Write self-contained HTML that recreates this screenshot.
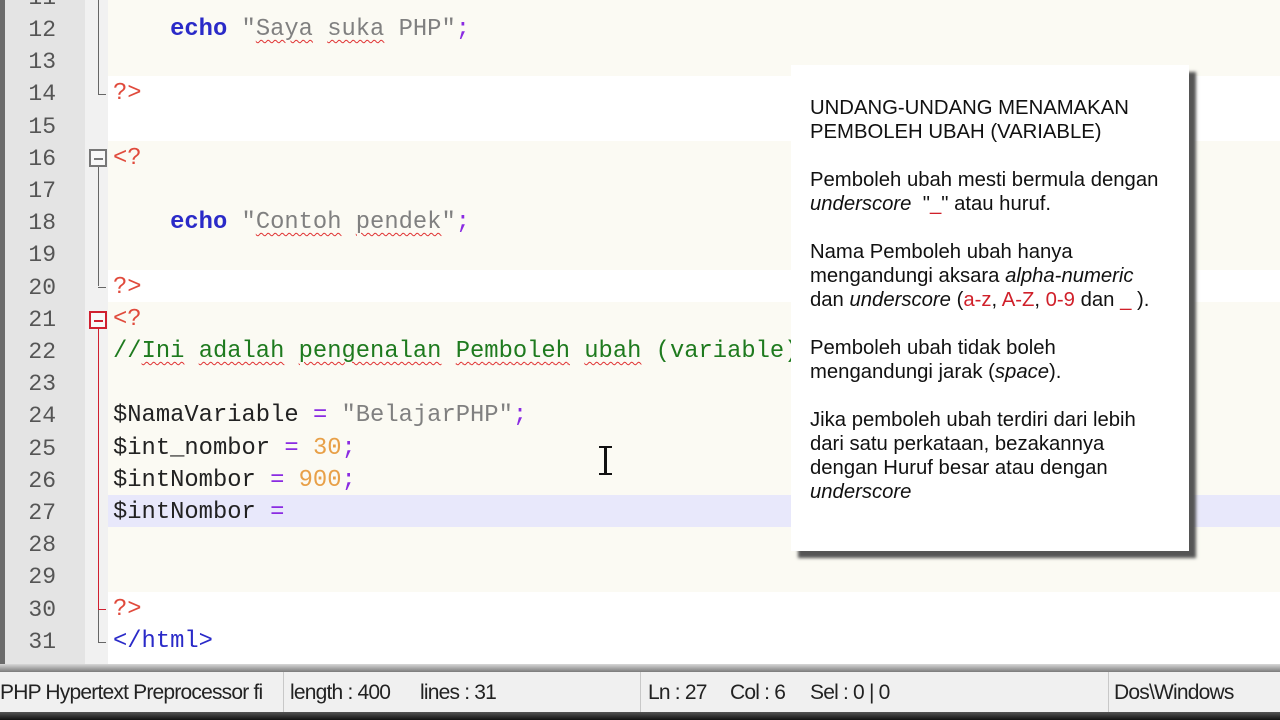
<!DOCTYPE html>
<html><head><style>
*{margin:0;padding:0;box-sizing:border-box}
body{width:1280px;height:720px;overflow:hidden;background:#fff;position:relative;font-family:"Liberation Mono",monospace}
#ed{position:absolute;left:0;top:0;width:1280px;height:664px;background:#fff;overflow:hidden}
.lb{position:absolute;left:0;top:0;width:5px;height:664px;background:#6b6b6b}
.nm{position:absolute;left:5px;top:0;width:80px;height:664px;background:#e4e4e4}
.fm{position:absolute;left:85px;top:0;width:23px;height:664px;background:#f1f1f1}
.row{position:absolute;left:108px;width:1172px;height:32.2px}
.bg{background:#fbfaf3}
.hl{background:#e8e8fb}
.n{position:absolute;left:5px;width:51px;text-align:right;font-size:23px;line-height:32px;color:#555;height:32px;margin-top:2px}
.c{position:absolute;left:113px;font-size:23.8px;line-height:32px;white-space:pre;color:#222;height:32px;margin-top:2px}
.k{color:#2a2ac8;font-weight:bold}.s{color:#808080}.t{color:#e04a3c}.g{color:#1e7a1e}.o{color:#8a2be2}.d{color:#e8a048}.b{color:#2a2ac8}
.w{text-decoration:underline wavy #e03030;text-underline-offset:4px;text-decoration-thickness:1px}
.vl{position:absolute;left:98px;width:1px}
.tick{position:absolute;left:98px;width:8px;height:1px}
.box{position:absolute;left:89px;width:18px;height:18px;border:2px solid #777;background:#f8f8f8}
.box:after{content:"";position:absolute;left:3px;top:7px;width:9px;height:2px;background:#777}
.box.red:after{background:#d02030}
#pop{position:absolute;left:791px;top:65px;width:398px;height:486px;background:#fff;box-shadow:7px 7px 3px #555;font-family:"Liberation Sans",Arial,sans-serif;font-size:20.3px;line-height:24px;color:#111;padding:31px 0 0 19px}
#pop p{margin-bottom:24px;white-space:nowrap}#pop .r{color:#d0202a}
#sb{position:absolute;left:0;top:664px;width:1280px;height:56px;background:#f0f0f0;font-family:"Liberation Sans",Arial,sans-serif;font-size:21px;color:#222}
#sb .top{position:absolute;left:0;top:0;width:1280px;height:8px;background:linear-gradient(#d8d8d8,#7a7a7a)}
#sb .bot{position:absolute;left:0;top:48px;width:1280px;height:8px;background:linear-gradient(#555,#111)}
#sb span{position:absolute;top:17px;white-space:pre;letter-spacing:-0.8px}
#sb .dv{position:absolute;top:8px;width:1px;height:40px;background:#c8c8c8}
</style></head><body>
<div id="ed">
<div class="lb"></div><div class="nm"></div><div class="fm"></div>
<div class="row bg" style="top:-20.2px;height:96.6px"></div>
<div class="row bg" style="top:140.8px;height:128.8px"></div>
<div class="row bg" style="top:301.8px;height:289.8px"></div>
<div class="row hl" style="top:495px"></div>
<div class="vl" style="top:0;height:95px;background:#666"></div>
<div class="vl" style="top:150px;height:136px;background:#666"></div>
<div class="tick" style="top:94px;background:#666"></div>
<div class="tick" style="top:287px;background:#666"></div>
<div class="box" style="top:149px"></div>
<div class="vl" style="top:320px;height:290px;background:#d02030"></div>
<div class="tick" style="top:609px;background:#d02030"></div>
<div class="box red" style="top:311px;border-color:#d02030"></div>
<div class="vl" style="top:610px;height:32px;background:#666"></div>
<div class="tick" style="top:642px;background:#666"></div>

<div class="n" style="top:-20.2px">11</div>
<div class="n" style="top:12px">12</div><div class="c" style="top:12px">    <span class="k">echo</span> <span class="s">"<span class="w">Saya</span> <span class="w">suka</span> PHP"</span><span class="o">;</span></div>
<div class="n" style="top:44.2px">13</div>
<div class="n" style="top:76.4px">14</div><div class="c" style="top:76.4px"><span class="t">?&gt;</span></div>
<div class="n" style="top:108.6px">15</div>
<div class="n" style="top:140.8px">16</div><div class="c" style="top:140.8px"><span class="t">&lt;?</span></div>
<div class="n" style="top:173px">17</div>
<div class="n" style="top:205.2px">18</div><div class="c" style="top:205.2px">    <span class="k">echo</span> <span class="s">"<span class="w">Contoh</span> <span class="w">pendek</span>"</span><span class="o">;</span></div>
<div class="n" style="top:237.4px">19</div>
<div class="n" style="top:269.6px">20</div><div class="c" style="top:269.6px"><span class="t">?&gt;</span></div>
<div class="n" style="top:301.8px">21</div><div class="c" style="top:301.8px"><span class="t">&lt;?</span></div>
<div class="n" style="top:334px">22</div><div class="c g" style="top:334px">//<span class="w">Ini</span> <span class="w">adalah</span> <span class="w">pengenalan</span> <span class="w">Pemboleh</span> <span class="w">ubah</span> (variable)</div>
<div class="n" style="top:366.2px">23</div>
<div class="n" style="top:398.4px">24</div><div class="c" style="top:398.4px">$NamaVariable <span class="o">=</span> <span class="s">"BelajarPHP"</span><span class="o">;</span></div>
<div class="n" style="top:430.6px">25</div><div class="c" style="top:430.6px">$int_nombor <span class="o">=</span> <span class="d">30</span><span class="o">;</span></div>
<div class="n" style="top:462.8px">26</div><div class="c" style="top:462.8px">$intNombor <span class="o">=</span> <span class="d">900</span><span class="o">;</span></div>
<div class="n" style="top:495px">27</div><div class="c" style="top:495px">$intNombor <span class="o">=</span></div>
<div class="n" style="top:527.2px">28</div>
<div class="n" style="top:559.4px">29</div>
<div class="n" style="top:591.6px">30</div><div class="c" style="top:591.6px"><span class="t">?&gt;</span></div>
<div class="n" style="top:623.8px">31</div><div class="c" style="top:623.8px"><span class="b">&lt;/html&gt;</span></div>

<div style="position:absolute;left:604px;top:447px;width:3px;height:28px;background:#111"></div>
<div style="position:absolute;left:599px;top:446px;width:13px;height:2px;background:#111"></div>
<div style="position:absolute;left:599px;top:473px;width:13px;height:2px;background:#111"></div>
</div>

<div id="pop">
<p>UNDANG-UNDANG MENAMAKAN<br>PEMBOLEH UBAH (VARIABLE)</p>
<p>Pemboleh ubah mesti bermula dengan<br><i>underscore</i> &nbsp;"<span class="r">_</span>" atau huruf.</p>
<p>Nama Pemboleh ubah hanya<br>mengandungi aksara <i>alpha-numeric</i><br>dan <i>underscore</i> (<span class="r">a-z</span>, <span class="r">A-Z</span>, <span class="r">0-9</span> dan <span class="r">_</span> ).</p>
<p>Pemboleh ubah tidak boleh<br>mengandungi jarak (<i>space</i>).</p>
<p>Jika pemboleh ubah terdiri dari lebih<br>dari satu perkataan, bezakannya<br>dengan Huruf besar atau dengan<br><i>underscore</i></p>
</div>

<div id="sb">
<div class="top"></div>
<span style="left:0">PHP Hypertext Preprocessor fi</span>
<div class="dv" style="left:283px"></div>
<span style="left:290px">length : 400</span>
<span style="left:420px">lines : 31</span>
<div class="dv" style="left:640px"></div>
<span style="left:648px">Ln : 27</span>
<span style="left:730px">Col : 6</span>
<span style="left:810px">Sel : 0 | 0</span>
<div class="dv" style="left:1108px"></div>
<span style="left:1114px">Dos\Windows</span>
<div class="bot"></div>
</div>
</body></html>
